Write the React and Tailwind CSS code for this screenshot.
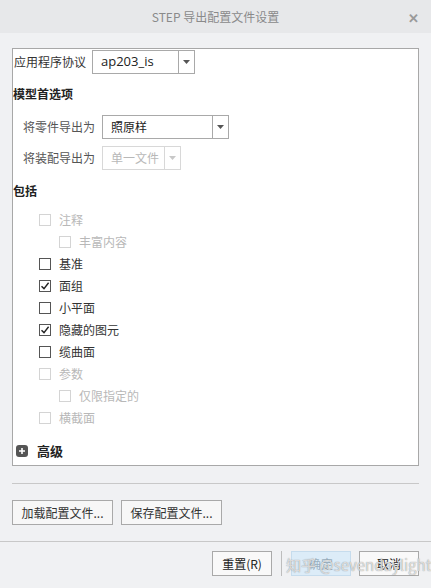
import { useState } from 'react';

const font = { fontFamily: '"Noto Sans CJK SC", "Noto Sans", sans-serif' };

function Box({ checked, disabled }) {
  return (
    <span
      className={`w-[12px] h-[12px] border flex items-center justify-center bg-white shrink-0 ${
        disabled ? 'border-[#d4d4d4]' : 'border-[#555]'
      }`}
    >
      {checked && (
        <svg width="10" height="10" viewBox="0 0 10 10">
          <path d="M1.5 5.2 L4 7.6 L8.6 1.8" fill="none" stroke="#222" strokeWidth="1.4" />
        </svg>
      )}
    </span>
  );
}

function Check({ label, checked, disabled, indent }) {
  return (
    <div className={`flex items-center gap-[8px] h-[22px] ${indent ? 'pl-[46px]' : 'pl-[26px]'}`}>
      <Box checked={checked} disabled={disabled} />
      <span className={disabled ? 'text-[#b8b8b8]' : 'text-[#333]'}>{label}</span>
    </div>
  );
}

function Select({ value, width, disabled }) {
  return (
    <div
      className={`flex h-[24px] border ${disabled ? 'border-[#d8d8d8] text-[#b8b8b8]' : 'border-[#a9a9a9] text-[#222]'} bg-white`}
      style={{ width }}
    >
      <div className="flex-1 flex items-center pl-[8px]">{value}</div>
      <div className={`w-[16px] flex items-center justify-center border-l ${disabled ? 'border-[#d8d8d8]' : 'border-[#a9a9a9]'}`}>
        <svg width="7" height="4" viewBox="0 0 7 4">
          <path d="M0 0 H7 L3.5 4 Z" fill={disabled ? '#c8c8c8' : '#555'} />
        </svg>
      </div>
    </div>
  );
}

export default function App() {
  const [items] = useState([
    { label: '注释', disabled: true },
    { label: '丰富内容', disabled: true, indent: true },
    { label: '基准' },
    { label: '面组', checked: true },
    { label: '小平面' },
    { label: '隐藏的图元', checked: true },
    { label: '缆曲面' },
    { label: '参数', disabled: true },
    { label: '仅限指定的', disabled: true, indent: true },
    { label: '横截面', disabled: true },
  ]);

  return (
    <div className="w-[431px] h-[588px] bg-[#f0f1f3] text-[12px] relative flex flex-col" style={font}>
      <div className="h-[33px] bg-[#e7e8ea] flex items-center justify-center relative shrink-0">
        <span className="text-[#8a8a8a] text-[12px]">STEP 导出配置文件设置</span>
        <span className="absolute right-[12px] top-[8px] text-[#9a9a9a] text-[13px] font-bold">✕</span>
      </div>

      <div className="mx-[12px] mt-[15px] h-[418px] bg-white border border-[#a8a8a8] flex flex-col">
        <div className="flex items-center h-[24px] mt-[1px] text-[#333]">
          <span className="w-[79px] pl-[1px]">应用程序协议</span>
          <Select value={<span style={{ fontFamily: '"Open Sans", "Noto Sans", sans-serif', fontSize: 13 }}>ap203_is</span>} width={103} />
        </div>
        <div className="mt-[11px] font-bold text-[#222] h-[20px]">模型首选项</div>

        <div className="flex items-center mt-[10px] pl-[10px] text-[#555]">
          <span className="w-[79px]">将零件导出为</span>
          <Select value="照原样" width={127} />
        </div>
        <div className="flex items-center mt-[7px] pl-[10px] text-[#555]">
          <span className="w-[79px]">将装配导出为</span>
          <Select value="单一文件" width={79} disabled />
        </div>

        <div className="mt-[12px] font-bold text-[#222] h-[20px]">包括</div>

        <div className="mt-[7px] flex flex-col">
          {items.map((it) => (
            <Check key={it.label} {...it} />
          ))}
        </div>

        <div className="flex items-center gap-[9px] pl-[3px] mt-[12px]">
          <span className="w-[12px] h-[12px] rounded-[3px] bg-[#555] flex items-center justify-center">
            <svg width="8" height="8" viewBox="0 0 8 8">
              <path d="M4 1 V7 M1 4 H7" stroke="#fff" strokeWidth="1.6" />
            </svg>
          </span>
          <span className="font-bold text-[#222] text-[13px]">高级</span>
        </div>
      </div>

      <div className="mx-[12px] mt-[17px] h-px bg-[#c8c8c8]" />

      <div className="flex gap-[8px] mx-[12px] mt-[16px]">
        <button className="w-[101px] h-[25px] border border-[#a9a9a9] bg-[#f7f7f7] text-[#333]">加载配置文件...</button>
        <button className="w-[101px] h-[25px] border border-[#a9a9a9] bg-[#f7f7f7] text-[#333]">保存配置文件...</button>
      </div>

      <div className="mt-[16px] h-px bg-[#c8c8c8]" />

      <div className="flex items-center justify-end gap-[8px] pr-[12px] mt-[9px]">
        <button className="w-[60px] h-[25px] border border-[#a9a9a9] bg-[#f9f9f9] text-[#222]">重置(R)</button>
        <div className="w-px h-[25px] bg-[#bdbdbd] mx-[1px]" />
        <button className="w-[60px] h-[25px] border border-[#c6dced] bg-[#dcecf8] text-[#9ab0c0]">确定</button>
        <button className="w-[60px] h-[25px] border border-[#a9a9a9] bg-[#f9f9f9] text-[#222]">取消</button>
      </div>

      <div className="absolute left-[286px] top-[554px] text-[15px] whitespace-nowrap text-white/70 pointer-events-none" style={{ textShadow: '0 0 1px #777', fontFamily: '"Noto Sans CJK SC", "Open Sans", sans-serif' }}>
        知乎 @sevendaylight
      </div>
    </div>
  );
}
